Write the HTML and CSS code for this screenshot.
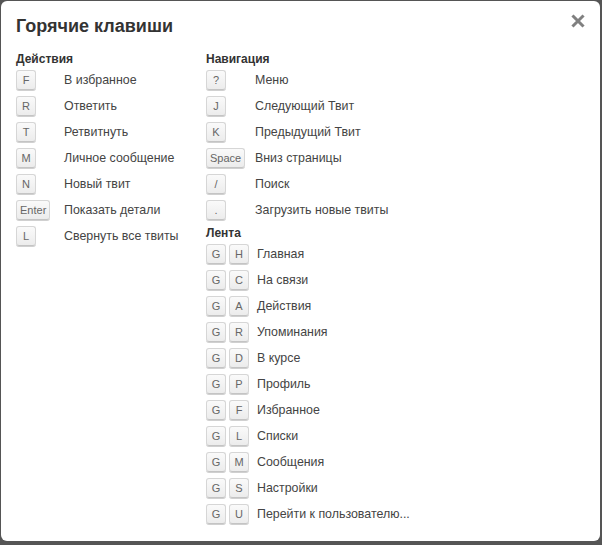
FILE: index.html
```html
<!DOCTYPE html>
<html lang="ru">
<head>
<meta charset="utf-8">
<link rel="stylesheet" href="styles.css">
</head>
<body>
<div class="modal">
  <div class="header">
    <h1 class="title">Горячие клавиши</h1>
    <span class="close">
      <svg width="14" height="14" viewBox="0 0 14 14"><path d="M2.5 2.5 L11.5 11.5 M11.5 2.5 L2.5 11.5" stroke="#808080" stroke-width="3" stroke-linecap="square"/></svg>
    </span>
  </div>
  <div class="columns">
    <div class="col col-left">
      <h2 class="section">Действия</h2>
      <div class="row"><span class="keys"><kbd class="key">F</kbd></span><span class="desc">В избранное</span></div>
      <div class="row"><span class="keys"><kbd class="key">R</kbd></span><span class="desc">Ответить</span></div>
      <div class="row"><span class="keys"><kbd class="key">T</kbd></span><span class="desc">Ретвитнуть</span></div>
      <div class="row"><span class="keys"><kbd class="key">M</kbd></span><span class="desc">Личное сообщение</span></div>
      <div class="row"><span class="keys"><kbd class="key">N</kbd></span><span class="desc">Новый твит</span></div>
      <div class="row"><span class="keys"><kbd class="key">Enter</kbd></span><span class="desc">Показать детали</span></div>
      <div class="row"><span class="keys"><kbd class="key">L</kbd></span><span class="desc">Свернуть все твиты</span></div>
    </div>
    <div class="col col-right">
      <h2 class="section">Навигация</h2>
      <div class="row nav"><span class="keys"><kbd class="key">?</kbd></span><span class="desc">Меню</span></div>
      <div class="row nav"><span class="keys"><kbd class="key">J</kbd></span><span class="desc">Следующий Твит</span></div>
      <div class="row nav"><span class="keys"><kbd class="key">K</kbd></span><span class="desc">Предыдущий Твит</span></div>
      <div class="row nav"><span class="keys"><kbd class="key">Space</kbd></span><span class="desc">Вниз страницы</span></div>
      <div class="row nav"><span class="keys"><kbd class="key">/</kbd></span><span class="desc">Поиск</span></div>
      <div class="row nav"><span class="keys"><kbd class="key">.</kbd></span><span class="desc">Загрузить новые твиты</span></div>
      <h2 class="section section-feed">Лента</h2>
      <div class="row feed"><span class="keys"><kbd class="key">G</kbd><kbd class="key">H</kbd></span><span class="desc">Главная</span></div>
      <div class="row feed"><span class="keys"><kbd class="key">G</kbd><kbd class="key">C</kbd></span><span class="desc">На связи</span></div>
      <div class="row feed"><span class="keys"><kbd class="key">G</kbd><kbd class="key">A</kbd></span><span class="desc">Действия</span></div>
      <div class="row feed"><span class="keys"><kbd class="key">G</kbd><kbd class="key">R</kbd></span><span class="desc">Упоминания</span></div>
      <div class="row feed"><span class="keys"><kbd class="key">G</kbd><kbd class="key">D</kbd></span><span class="desc">В курсе</span></div>
      <div class="row feed"><span class="keys"><kbd class="key">G</kbd><kbd class="key">P</kbd></span><span class="desc">Профиль</span></div>
      <div class="row feed"><span class="keys"><kbd class="key">G</kbd><kbd class="key">F</kbd></span><span class="desc">Избранное</span></div>
      <div class="row feed"><span class="keys"><kbd class="key">G</kbd><kbd class="key">L</kbd></span><span class="desc">Списки</span></div>
      <div class="row feed"><span class="keys"><kbd class="key">G</kbd><kbd class="key">M</kbd></span><span class="desc">Сообщения</span></div>
      <div class="row feed"><span class="keys"><kbd class="key">G</kbd><kbd class="key">S</kbd></span><span class="desc">Настройки</span></div>
      <div class="row feed"><span class="keys"><kbd class="key">G</kbd><kbd class="key">U</kbd></span><span class="desc">Перейти к пользователю...</span></div>
    </div>
  </div>
</div>
</body>
</html>
```
FILE: styles.css
```css
* { box-sizing: border-box; }
html, body { margin: 0; padding: 0; }
body {
  background: #555555;
  font-family: "Liberation Sans", Arial, sans-serif;
  color: #333333;
  width: 602px;
  height: 545px;
  overflow: hidden;
}
.modal {
  margin: 1px 2px 0 1px;
  height: 540px;
  background: #ffffff;
  border-radius: 6px;
  padding: 13px 15px 0 15px;
}
.header {
  display: flex;
  justify-content: space-between;
  align-items: flex-start;
}
.title {
  margin: 0;
  font-size: 18px;
  line-height: 24px;
  font-weight: bold;
  color: #333333;
}
.close {
  display: block;
  margin-top: 0;
  margin-right: 0;
  width: 14px;
  height: 14px;
}
.close svg { display: block; }
.columns {
  display: flex;
  margin-top: 13px;
}
.col-left { width: 190px; }
.col-right { flex: 1; }
.section {
  margin: 0;
  font-size: 12px;
  line-height: 16px;
  font-weight: bold;
  color: #333333;
}
.section-feed { margin-top: 2px; }
.row {
  display: flex;
  align-items: center;
  height: 26px;
}
.keys {
  display: flex;
  gap: 3px;
  width: 48px;
  flex: none;
}
.nav .keys { width: 49px; }
.feed .keys { width: 51px; }
.key {
  display: inline-block;
  min-width: 20px;
  height: 20px;
  padding: 0 3px;
  border: 1px solid #d6d6d6;
  border-bottom-color: #c4c4c4;
  border-radius: 3px;
  background: linear-gradient(#fafafa, #ececec);
  box-shadow: 0 1px 0 #d0d0d0;
  font-family: "Liberation Sans", Arial, sans-serif;
  font-size: 11px;
  line-height: 18px;
  text-align: center;
  color: #666666;
}
.desc {
  font-size: 12.4px;
  line-height: 16px;
  color: #444444;
}
```
